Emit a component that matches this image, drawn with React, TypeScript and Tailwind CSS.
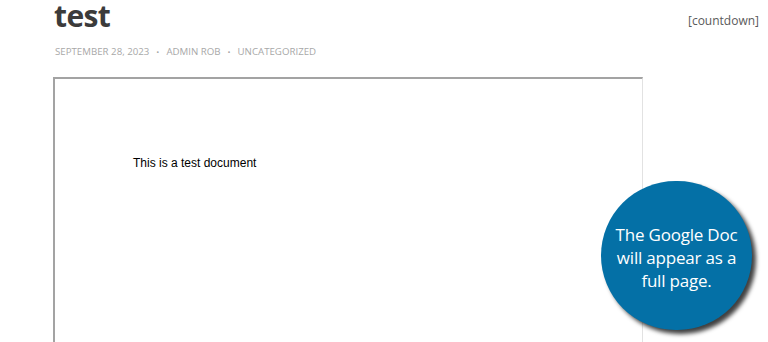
import React from "react";

export default function App() {
  return (
    <div className="relative w-[768px] h-[342px] overflow-hidden bg-white" style={{ fontFamily: '"Open Sans", sans-serif' }}>
      <div className="flex">
        <div className="ml-[53px] w-[590px] flex flex-col">
          <h1 className="mt-[1px] h-[30px] text-[30px] font-bold leading-[30px] tracking-[-0.6px] text-[#3b3b3b] pl-[1px]">test</h1>
          <div className="mt-[14px] ml-[2px] flex items-center text-[9.7px] uppercase text-[#a8a8a8] leading-[14px]">
            <span>September 28, 2023</span>
            <span className="mx-[7px] text-[8px]">•</span>
            <span>Admin Rob</span>
            <span className="mx-[7px] text-[8px]">•</span>
            <span>Uncategorized</span>
          </div>
          <div className="mt-[18px] h-[300px] border-t-2 border-l-2 border-r border-t-[#a3a3a3] border-l-[#a3a3a3] border-r-[#e2e2e2] bg-white">
            <p className="mt-[77px] ml-[78px] text-[12px] leading-[14px] text-black" style={{ fontFamily: '"Liberation Sans", Arial, sans-serif' }}>
              This is a test document
            </p>
          </div>
        </div>
        <div className="ml-auto mr-[9px] mt-[12px] text-[12px] text-[#5a5a5a]">[countdown]</div>
      </div>
      <div className="absolute left-[601px] top-[181px] w-[151px] h-[149px] rounded-full bg-[#0470a6] shadow-[4px_4px_4px_rgba(0,0,0,0.75)] flex items-center justify-center">
        <p className="mt-[4px] text-center text-white text-[17px] leading-[23px] tracking-[-0.2px]" style={{ fontFamily: '"Open Sans", sans-serif' }}>
          The Google Doc<br />will appear as a<br />full page.
        </p>
      </div>
    </div>
  );
}
